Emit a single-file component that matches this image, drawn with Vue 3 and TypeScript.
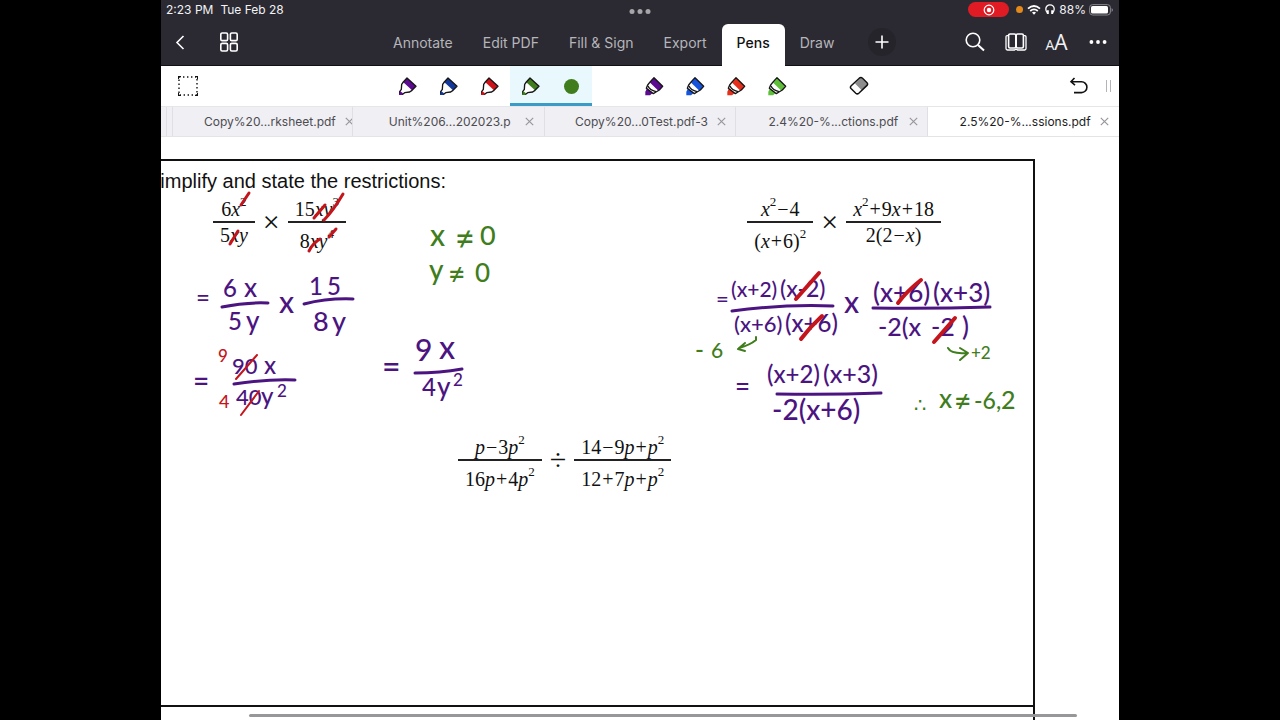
<script setup lang="ts">
interface Term { t: string; sup?: string }
interface Fraction { top: Term[]; bottom: Term[] }
interface Equation { name: string; op: string; left: Fraction; right: Fraction }
interface InkText { x: number; y: number; s: number; t: string }
interface InkLine { d: string; w: number }

const modes = ['Annotate', 'Edit PDF', 'Fill & Sign', 'Export', 'Pens', 'Draw']

const pens = [
  { label: 'Purple pen', color: '#5b0a91' },
  { label: 'Navy pen', color: '#12389c' },
  { label: 'Red pen', color: '#cf1218' },
]
const highlighters = [
  { label: 'Purple highlighter', color: '#5b0a91' },
  { label: 'Blue highlighter', color: '#1554dc' },
  { label: 'Red highlighter', color: '#e6301c' },
  { label: 'Green highlighter', color: '#5fbf3a' },
]

const tabs = [
  'Copy%20...rksheet.pdf',
  'Unit%206...202023.p',
  'Copy%20...0Test.pdf-3',
  '2.4%20-%...ctions.pdf',
  '2.5%20-%...ssions.pdf',
]

const equations: Equation[] = [
  {
    name: 'first', op: '×',
    left: { top: [{ t: '6x', sup: '2' }], bottom: [{ t: '5xy' }] },
    right: { top: [{ t: '15xy', sup: '3' }], bottom: [{ t: '8xy', sup: '4' }] },
  },
  {
    name: 'second', op: '×',
    left: { top: [{ t: 'x', sup: '2' }, { t: '−4' }], bottom: [{ t: '(x+6)', sup: '2' }] },
    right: { top: [{ t: 'x', sup: '2' }, { t: '+9x+18' }], bottom: [{ t: '2(2−x)' }] },
  },
  {
    name: 'third', op: '÷',
    left: { top: [{ t: 'p−3p', sup: '2' }], bottom: [{ t: '16p+4p', sup: '2' }] },
    right: { top: [{ t: '14−9p+p', sup: '2' }], bottom: [{ t: '12+7p+p', sup: '2' }] },
  },
]

// Splits a term into variables (italic), signs (spaced) and plain numbers.
const kind = (s: string) => (/^[a-z]$/.test(s) ? 'variable' : /^[+−]$/.test(s) ? 'sign' : 'number')
const pieces = (t: string) => t.split(/([a-z+−])/).filter(Boolean).map(s => ({ s, k: kind(s) }))

const purpleText: InkText[] = [
  { x: 196, y: 306, s: 24, t: '=' },
  { x: 223, y: 297, s: 24, t: '6' }, { x: 244, y: 297, s: 26, t: 'x' },
  { x: 228, y: 330, s: 24, t: '5' }, { x: 246, y: 330, s: 26, t: 'y' },
  { x: 279, y: 313, s: 30, t: 'x' },
  { x: 309, y: 295, s: 24, t: '1' }, { x: 327, y: 295, s: 24, t: '5' },
  { x: 313, y: 331, s: 27, t: '8' }, { x: 332, y: 331, s: 27, t: 'y' },
  { x: 193, y: 391, s: 28, t: '=' },
  { x: 232, y: 374, s: 22, t: '90' }, { x: 264, y: 374, s: 24, t: 'x' },
  { x: 236, y: 405, s: 22, t: '40' }, { x: 261, y: 405, s: 24, t: 'y' }, { x: 277, y: 397, s: 17, t: '2' },
  { x: 382, y: 378, s: 32, t: '=' },
  { x: 415, y: 361, s: 30, t: '9' }, { x: 439, y: 359, s: 32, t: 'x' },
  { x: 422, y: 396, s: 24, t: '4' }, { x: 437, y: 396, s: 26, t: 'y' }, { x: 453, y: 386, s: 17, t: '2' },
  { x: 716, y: 307, s: 22, t: '=' },
  { x: 731, y: 297, s: 21, t: '(x+2)' }, { x: 780, y: 297, s: 23, t: '(x-2)' },
  { x: 734, y: 332, s: 22, t: '(x+6)' }, { x: 785, y: 332, s: 24, t: '(x+6)' },
  { x: 844, y: 313, s: 30, t: 'x' },
  { x: 873, y: 302, s: 26, t: '(x+6)' }, { x: 933, y: 302, s: 26, t: '(x+3)' },
  { x: 878, y: 336, s: 25, t: '-2(x' }, { x: 931, y: 336, s: 25, t: '-2' }, { x: 962, y: 336, s: 26, t: ')' },
  { x: 735, y: 396, s: 26, t: '=' },
  { x: 767, y: 383, s: 24, t: '(x+2)' }, { x: 823, y: 383, s: 25, t: '(x+3)' },
  { x: 772, y: 420, s: 28, t: '-2(x+6)' },
]
const greenText: InkText[] = [
  { x: 430, y: 246, s: 30, t: 'x' }, { x: 455, y: 250, s: 34, t: '≠' }, { x: 480, y: 245, s: 27, t: '0' },
  { x: 429, y: 280, s: 28, t: 'y' }, { x: 448, y: 285, s: 30, t: '≠' }, { x: 475, y: 282, s: 26, t: '0' },
  { x: 695, y: 359, s: 24, t: '-' }, { x: 711, y: 358, s: 21, t: '6' },
  { x: 971, y: 359, s: 17, t: '+2' },
  { x: 914, y: 412, s: 20, t: '∴' },
  { x: 939, y: 408, s: 26, t: 'x' }, { x: 954, y: 412, s: 30, t: '≠' },
  { x: 974, y: 409, s: 23, t: '-6,' }, { x: 1001, y: 409, s: 25, t: '2' },
]
const redText: InkText[] = [
  { x: 218, y: 362, s: 17, t: '9' },
  { x: 219, y: 408, s: 18, t: '4' },
]
const purpleLines: InkLine[] = [
  { d: 'M222 307Q246 302 268 303', w: 3 },
  { d: 'M304 304Q328 298 353 299', w: 3 },
  { d: 'M234 384Q266 379 295 380', w: 3 },
  { d: 'M415 373Q440 373 462 369', w: 3 },
  { d: 'M732 311Q784 304 833 306', w: 3 },
  { d: 'M873 308Q930 309 990 307', w: 3 },
  { d: 'M777 394Q830 395 881 393', w: 3 },
]
const greenLines: InkLine[] = [
  { d: 'M756 337V340Q750 345 739 348M745 343L738 349L745 351', w: 2 },
  { d: 'M948 348Q951 354 966 353M960 348L968 353L960 360', w: 2 },
]
const redLines: InkLine[] = [
  { d: 'M241 205L249 193', w: 3 },
  { d: 'M230 244L238 231', w: 3 },
  { d: 'M314 218L325 205', w: 3 },
  { d: 'M324 220Q333 211 343 194', w: 3 },
  { d: 'M309 251Q313 243 320 239', w: 3 },
  { d: 'M329 237L336 229', w: 3 },
  { d: 'M236 379L257 355', w: 2 },
  { d: 'M241 415L259 391', w: 2 },
  { d: 'M796 299L819 273', w: 4 },
  { d: 'M801 339Q810 327 822 316', w: 4 },
  { d: 'M898 303Q907 291 921 280', w: 4 },
  { d: 'M934 342L955 318', w: 4 },
]
const ink = [
  { name: 'purple', texts: purpleText, lines: purpleLines },
  { name: 'green', texts: greenText, lines: greenLines },
  { name: 'red', texts: redText, lines: redLines },
]
</script>

<template>
  <div class="stage">
    <main class="tablet">
      <header class="chrome">
        <div class="status">
          <span class="clock">2:23 PM</span>
          <span>Tue Feb 28</span>
          <span class="multitask"><i></i><i></i><i></i></span>
          <span class="status-right">
            <span class="recording">
              <svg width="12" height="12" viewBox="0 0 12 12"><circle cx="6" cy="6" r="4.8" fill="none" stroke="#fff" stroke-width="1.2" /><circle cx="6" cy="6" r="2.2" fill="#fff" /></svg>
            </span>
            <i class="mic"></i>
            <svg width="14" height="10" viewBox="0 0 14 10" fill="none" stroke="#fff" stroke-width="1.8"><path d="M1 3.6Q7-1.6 13 3.6M3.2 6Q7 2.8 10.8 6" /><path d="M5 7.6Q7 6 9 7.6L7 9.8Z" fill="#fff" stroke="none" /></svg>
            <svg width="10" height="11" viewBox="0 0 10 11" fill="none" stroke="#fff" stroke-width="1.3"><path d="M2.2 8.5Q.8 7 .8 5A4.2 4.2 0 0 1 9.2 5Q9.2 7 7.8 8.5" /><path d="M2.8 6.2V10M7.2 6.2V10" stroke-width="2" /></svg>
            <span class="percent">88%</span>
            <svg width="24" height="12" viewBox="0 0 24 12"><rect x=".6" y=".6" width="20.8" height="10.4" rx="3" fill="none" stroke="#85858c" /><rect x="2" y="2" width="17" height="7.6" rx="1.6" fill="#fff" /><path d="M22.6 4V8Q24 7 24 6T22.6 4" fill="#85858c" /></svg>
          </span>
        </div>
        <div class="toolbar">
          <div class="left-tools">
            <button aria-label="Back"><svg width="12" height="16" viewBox="0 0 12 16"><path d="M9.5 2L3 8.5L9.5 15" /></svg></button>
            <button aria-label="All documents"><svg width="20" height="20" viewBox="0 0 20 20"><rect x="1.8" y="1" width="6.8" height="7.6" rx="1.4" /><rect x="11.4" y="1" width="6.8" height="7.6" rx="1.4" /><rect x="1.8" y="11.4" width="6.8" height="7.6" rx="1.4" /><rect x="11.4" y="11.4" width="6.8" height="7.6" rx="1.4" /></svg></button>
          </div>
          <nav class="modes">
            <button v-for="m in modes" :key="m" :class="{ active: m === 'Pens' }">{{ m }}</button>
          </nav>
          <button class="add" aria-label="Add tool"><svg width="14" height="14" viewBox="0 0 14 14"><path d="M7 .5V13.5M.5 7H13.5" /></svg></button>
          <div class="right-tools">
            <button aria-label="Search"><svg width="20" height="20" viewBox="0 0 20 20"><circle cx="8" cy="8" r="6.8" /><path d="M13 13L19 18.6" stroke-width="2" /></svg></button>
            <button aria-label="Reading view"><svg width="22" height="18" viewBox="0 0 22 18"><rect x="3.6" y="1" width="7.2" height="14" rx="1.4" /><rect x="11.2" y="1" width="7.2" height="14" rx="1.4" /><path d="M3.4 2.6H2.2Q1 2.6 1 4V15.6Q1 17 2.4 17H9.5L11 16L12.5 17H19.6Q21 17 21 15.6V4Q21 2.6 19.8 2.6H18.6" stroke-width="1.3" /></svg></button>
            <button class="text-size" aria-label="Text size"><small>A</small><span>A</span></button>
            <button aria-label="More"><svg class="solid" width="18" height="6" viewBox="0 0 18 6"><circle cx="2.4" cy="3" r="1.9" /><circle cx="9" cy="3" r="1.9" /><circle cx="15.6" cy="3" r="1.9" /></svg></button>
          </div>
        </div>
      </header>

      <div class="penbar">
        <div class="select-area">
          <button aria-label="Select area"><svg width="20" height="20" viewBox="0 0 20 20"><rect x="1" y="1" width="18" height="18" fill="none" stroke="#111" stroke-width="1.4" stroke-dasharray="1.4 2.6" /><path d="M.3 3V.3H3M17 .3H19.7V3M19.7 17V19.7H17M3 19.7H.3V17" fill="none" stroke="#111" stroke-width="1.4" /></svg></button>
        </div>
        <div class="group">
          <button v-for="p in pens" :key="p.label" :aria-label="p.label">
            <svg width="20" height="20" viewBox="-3 -3 60 60"><path d="M24 3L51 28L39 40L13 16Z" :fill="p.color" /><path d="M24 3L51 28L39 40L32 45L17 47L11 52H2V44L7 37L8 22L13 15Z" fill="none" class="outline" /><path d="M3 42L12 49L10 54H0Z" :fill="p.color" /></svg>
          </button>
          <div class="picked">
            <button aria-label="Green pen">
              <svg width="20" height="20" viewBox="-3 -3 60 60"><path d="M13 16L39 40L32 45L17 47L11 52H2V44L7 37L8 22Z" fill="#fff" /><path d="M24 3L51 28L39 40L13 16Z" fill="#3f7d1d" /><path d="M24 3L51 28L39 40L32 45L17 47L11 52H2V44L7 37L8 22L13 15Z" fill="none" class="outline" /><path d="M3 42L12 49L10 54H0Z" fill="#3f7d1d" /></svg>
            </button>
            <button aria-label="Pen colour"><i class="swatch"></i></button>
          </div>
        </div>
        <div class="group">
          <button v-for="h in highlighters" :key="h.label" :aria-label="h.label">
            <svg width="20" height="20" viewBox="-3 -3 60 60"><path d="M27 2L53 28L40 41L14 16Z" :fill="h.color" /><path d="M6 34L24 47L15 55H1V44Z" :fill="h.color" /><path d="M27 2L53 28L43 39L33 45L25 50L4 34L8 24L16 14Z" fill="none" class="outline" /><path d="M9 27Q14 39 33 44" fill="none" class="outline" /></svg>
          </button>
        </div>
        <button aria-label="Eraser"><svg width="20" height="20" viewBox="0 0 20 20"><path d="M12 1.5L19 8.5L13 14.5L6 7.5Z" fill="#8d8d8d" /><path d="M10.3 2.2Q12 .8 13.5 2.2L18 6.7Q19.2 8 18 9.4L9.8 17.2Q8.3 18.5 6.8 17.2L2 12.6Q.8 11.2 2.2 9.8Z" fill="none" stroke="#111" stroke-width="1.5" /></svg></button>
        <div class="end-tools">
          <button aria-label="Undo"><svg width="20" height="18" viewBox="0 0 20 18"><path d="M5.5 1L2 4.8L6 8.2M2.2 4.8H12.5A5.4 5.4 0 0 1 12.5 15.6H5" fill="none" stroke="#111" stroke-width="1.6" /></svg></button>
          <i class="grip"></i>
        </div>
      </div>

      <nav class="tabs" aria-label="Open documents">
        <i class="stacked"></i><i class="stacked"></i>
        <div v-for="(t, i) in tabs" :key="t" class="tab" :class="{ first: i === 0, current: i === 4 }">
          <a href="#">{{ t }}</a>
          <button :aria-label="'Close ' + t"><svg width="9" height="9" viewBox="0 0 9 9"><path d="M.8 .8L8.2 8.2M8.2 .8L.8 8.2" /></svg></button>
        </div>
      </nav>

      <article class="document">
        <section class="sheet">
          <h1>Simplify and state the restrictions:</h1>
          <div class="problems">
            <div v-for="e in equations" :key="e.name" class="equation" :class="e.name">
              <template v-for="(f, i) in [e.left, e.right]" :key="i">
                <span v-if="i === 1" class="op">{{ e.op }}</span>
                <span class="fraction">
                  <span class="top"><span><template v-for="(term, k) in f.top" :key="k"><span v-for="(p, n) in pieces(term.t)" :key="n" :class="p.k">{{ p.s }}</span><sup v-if="term.sup">{{ term.sup }}</sup></template></span></span>
                  <span class="bottom" :class="{ tall: f.bottom[0].sup }"><span><template v-for="(term, k) in f.bottom" :key="k"><span v-for="(p, n) in pieces(term.t)" :key="n" :class="p.k">{{ p.s }}</span><sup v-if="term.sup">{{ term.sup }}</sup></template></span></span>
                </span>
              </template>
            </div>
          </div>
        </section>
        <section class="next-sheet"></section>

        <svg class="ink" width="958" height="583" viewBox="161 137 958 583">
          <g v-for="g in ink" :key="g.name" :class="g.name">
            <text v-for="(n, i) in g.texts" :key="i" :x="n.x" :y="n.y" :font-size="n.s">{{ n.t }}</text>
            <path v-for="(l, i) in g.lines" :key="'l' + i" :d="l.d" :stroke-width="l.w" />
          </g>
        </svg>
        <div class="scrollbar"></div>
      </article>
    </main>
  </div>
</template>

<style>
body { background: #000; }
</style>

<style scoped>
.stage {
  min-height: 100vh;
  display: flex;
  justify-content: center;
  background: #000;
  font-family: Inter, "Open Sans", sans-serif;
}
.tablet {
  width: 75%;
  box-sizing: border-box;
  padding: 0 1px;
  display: flex;
  flex-direction: column;
  overflow: hidden;
}
button {
  display: flex;
  align-items: center;
  justify-content: center;
  margin: 0;
  padding: 0;
  border: 0;
  background: none;
  color: inherit;
  font: inherit;
}
svg { display: block; }
.chrome { background: #2b2a32; color: #f2f2f4; border-bottom: 1px solid #111; }
.status {
  position: relative;
  display: flex;
  align-items: center;
  height: 19px;
  padding: 0 6px 0 5px;
  font-size: 12px;
}
.clock { margin-right: 7px; }
.multitask {
  position: absolute;
  left: 50%;
  top: 9px;
  display: flex;
  gap: 3px;
  transform: translateX(-50%);
}
.multitask i { width: 5px; height: 5px; border-radius: 50%; background: #a5a5aa; }
.status-right { margin-left: auto; display: flex; align-items: center; gap: 4px; }
.recording {
  display: flex;
  align-items: center;
  justify-content: center;
  width: 41px;
  height: 15px;
  margin-right: 3px;
  border-radius: 8px;
  background: #e01b24;
}
.mic { width: 7px; height: 7px; border-radius: 50%; background: #e58a1a; }
.percent { margin-right: -1px; }
.toolbar { display: flex; height: 46px; align-items: center; }
.toolbar svg { fill: none; stroke: #fff; stroke-width: 1.6; }
.toolbar svg.solid { fill: #fff; stroke: none; }
.left-tools { flex: 0 0 217px; display: flex; }
.left-tools button { width: 38px; height: 46px; }
.left-tools button + button { margin-left: 11px; }
.modes { display: flex; align-self: stretch; }
.modes button { padding: 0 15px; font-size: 14px; color: #b5b5ba; white-space: nowrap; }
.modes .active {
  height: 42px;
  margin-top: 5px;
  padding-bottom: 6px;
  border-radius: 6px 6px 0 0;
  background: #fff;
  color: #111;
  font-weight: 500;
}
.add { width: 28px; height: 28px; margin-left: 19px; border-radius: 50%; background: #25242b; }
.right-tools { display: flex; margin-left: auto; margin-right: 1px; }
.right-tools button { width: 41px; height: 46px; }
.right-tools .text-size { align-items: baseline; line-height: 46px; font-family: "Open Sans", sans-serif; }
.text-size small { font-size: 14px; }
.text-size span { font-size: 21px; }

.penbar { display: flex; align-items: stretch; height: 40px; background: #fff; border-bottom: 1px solid #e6e6ea; }
.penbar button { width: 41px; height: 40px; }
.select-area { flex: 0 0 226px; padding-left: 6px; box-sizing: border-box; }
.group { display: flex; margin-right: 41px; }
.outline { stroke: #151515; stroke-width: 4; stroke-linejoin: round; }
.picked { display: flex; background: #e9f8fc; box-shadow: inset 0 -3px #3b9bc7; }
.swatch { width: 15px; height: 15px; border-radius: 50%; background: #3f7d1d; }
.end-tools { display: flex; align-items: center; margin-left: auto; }
.grip { width: 3px; height: 12px; margin: 0 8px 0 7px; border-left: 1px solid #b4b4b8; border-right: 1px solid #b4b4b8; }

.tabs { display: flex; height: 29px; background: #f0eff4; border-bottom: 1px solid #e3e3e8; }
.stacked { flex: 0 0 5px; border-right: 1px solid #e0e0e4; }
.tab {
  position: relative;
  flex: 1 1 0;
  min-width: 0;
  display: flex;
  align-items: center;
  padding-left: 31px;
  background: #f0eff4;
  border-left: 1px solid #e0e0e4;
  color: #4c4c50;
}
.first { margin-right: -12px; border-left: 0; }
.tab a {
  flex: 1 1 0;
  min-width: 0;
  display: flex;
  justify-content: center;
  color: inherit;
  font-size: 12px;
  text-decoration: none;
  white-space: nowrap;
}
.tab button { flex: 0 0 28px; height: 29px; }
.tab svg { fill: none; stroke: #98989c; stroke-width: 1.2; }
.current { background: #fff; color: #1c1c1e; }

.document {
  position: relative;
  flex: 1 1 auto;
  display: flex;
  flex-direction: column;
  padding-top: 22px;
  background: #fff;
  overflow: hidden;
}
.sheet {
  flex: 1 1 auto;
  margin-right: 84px;
  border: 2px solid #111;
  border-left: 0;
}
.next-sheet { flex: 0 0 13px; margin-right: 84px; border-right: 2px solid #111; }
h1 {
  margin: 8px 0 0 -14px;
  font: 400 20px/24px "Liberation Sans", Arial, sans-serif;
  color: #111;
  white-space: nowrap;
}
.problems {
  display: flex;
  flex-wrap: wrap;
  justify-content: space-between;
  padding: 0 92px 0 52px;
  color: #111;
  font: 20px/24px "Liberation Serif", "Times New Roman", serif;
}
.equation { display: flex; align-items: flex-start; gap: 8px; }
.third { flex: 1 0 100%; margin-top: 178px; padding-left: 245px; }
.fraction { display: flex; flex-direction: column; text-align: center; white-space: nowrap; }
.top { display: flex; flex-direction: column; justify-content: flex-end; height: 28px; padding: 0 7px; border-bottom: 2px solid #222; }
.bottom { padding: 0 7px; }
.tall { padding-top: 6px; }
.variable { font-style: italic; }
.sign { margin: 0 1px; }
.op { height: 58px; font-size: 30px; line-height: 58px; }
sup { font-size: 13px; line-height: 0; vertical-align: 10px; }

.ink { position: absolute; left: 0; top: 0; font-family: Lato, "DejaVu Sans", sans-serif; font-weight: 500; }
.ink path { fill: none; stroke-linecap: round; stroke-linejoin: round; }
.purple { fill: #4b1480; }
.purple path { stroke: #4b1480; }
.green { fill: #3f7d1d; }
.green path { stroke: #3f7d1d; }
.red { fill: #c4141c; }
.red path { stroke: #c4141c; }
.scrollbar { position: absolute; left: 88px; right: 42px; bottom: 3px; height: 3px; border-radius: 2px; background: #97979a; }
</style>
